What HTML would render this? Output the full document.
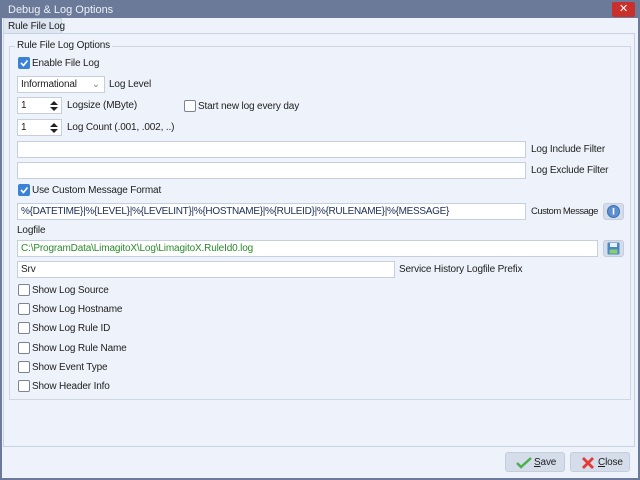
<!DOCTYPE html>
<html><head><meta charset="utf-8"><style>
*{margin:0;padding:0;box-sizing:border-box}
body{width:640px;height:480px;overflow:hidden;background:#6b7a99;font-family:"Liberation Sans",Tahoma,sans-serif;font-size:10px;letter-spacing:-0.15px;color:#1e1e1e;position:relative}
.a{position:absolute;white-space:nowrap}
.win{position:absolute;left:2px;top:18px;width:636px;height:460px;background:#eef2fa}
.inp{position:absolute;background:#fff;border:1px solid #c6cfdc;height:17px;padding-left:3px;line-height:15px;overflow:hidden;white-space:nowrap}
.cb{position:absolute;width:12px;height:12px;border:1px solid #7b8494;background:#fff;border-radius:2px}
.cb.on{background:#3b82d6;border-color:#3b82d6}
.btn{position:absolute;background:#d4dde9;border:1px solid #c4cedb;border-radius:3px}
</style></head><body>
<div class="a" style="left:8px;top:4px;color:#eef1f6;font-size:11px;letter-spacing:0">Debug &amp; Log Options</div>
<div class="a" style="left:612px;top:2px;width:23px;height:15px;background:#c9302c;border-radius:2px;color:#fff;text-align:center;font-size:11px;line-height:15px">✕</div>
<div class="win"></div>
<div class="a" style="left:3px;top:18px;width:59px;height:16px;background:#dde6f1;border:1px solid #c8d2e0;border-bottom:none;padding-left:4px;line-height:16px">Rule File Log</div>
<div class="a" style="left:3px;top:33px;width:632px;height:414px;border:1px solid #c8d2e0;background:#eef2fa"></div>
<div class="a" style="left:9px;top:46px;width:622px;height:354px;border:1px solid #cfd7e3"></div>
<div class="a" style="left:15px;top:40px;background:#eef2fa;padding:0 2px">Rule File Log Options</div>

<div class="cb on" style="left:18px;top:57px"><svg width="10" height="10" style="position:absolute;left:0;top:0"><path d="M2 5l2.5 2.5L8.5 2.5" stroke="#fff" stroke-width="1.6" fill="none"/></svg></div>
<div class="a" style="left:32px;top:58px">Enable File Log</div>

<div class="inp" style="left:17px;top:76px;width:88px">Informational<span style="position:absolute;right:4px;top:0;color:#888">&#8964;</span></div>
<div class="a" style="left:109px;top:79px">Log Level</div>

<div class="inp" style="left:17px;top:97px;width:45px">1<svg width="8" height="12" style="position:absolute;right:3px;top:2px"><path d="M0 5L4 1L8 5Z M0 7L4 11L8 7Z" fill="#222"/></svg></div>
<div class="a" style="left:67px;top:100px">Logsize (MByte)</div>
<div class="cb" style="left:184px;top:100px"></div>
<div class="a" style="left:198px;top:101px">Start new log every day</div>
<div class="inp" style="left:17px;top:119px;width:45px">1<svg width="8" height="12" style="position:absolute;right:3px;top:2px"><path d="M0 5L4 1L8 5Z M0 7L4 11L8 7Z" fill="#222"/></svg></div>
<div class="a" style="left:67px;top:122px">Log Count (.001, .002, ..)</div>

<div class="inp" style="left:17px;top:141px;width:509px"></div>
<div class="a" style="left:531px;top:144px">Log Include Filter</div>
<div class="inp" style="left:17px;top:162px;width:509px"></div>
<div class="a" style="left:531px;top:165px">Log Exclude Filter</div>

<div class="cb on" style="left:18px;top:184px"><svg width="10" height="10" style="position:absolute;left:0;top:0"><path d="M2 5l2.5 2.5L8.5 2.5" stroke="#fff" stroke-width="1.6" fill="none"/></svg></div>
<div class="a" style="left:32px;top:185px">Use Custom Message Format</div>

<div class="inp" style="left:17px;top:203px;width:509px;color:#1c2f55;letter-spacing:-0.3px">%{DATETIME}|%{LEVEL}|%{LEVELINT}|%{HOSTNAME}|%{RULEID}|%{RULENAME}|%{MESSAGE}</div>
<div class="a" style="left:531px;top:206px;letter-spacing:-0.5px;font-size:9.5px">Custom Message</div>
<div class="btn" style="left:603px;top:203px;width:21px;height:17px"><svg width="13" height="13" style="position:absolute;left:3px;top:1px"><circle cx="6.5" cy="6.5" r="6" fill="#5b8fcf" stroke="#3a6fb0"/><rect x="5.7" y="3" width="1.6" height="6.5" fill="#fff"/></svg></div>

<div class="a" style="left:17px;top:225px">Logfile</div>
<div class="inp" style="left:17px;top:240px;width:581px;color:#2a8a2a">C:\ProgramData\LimagitoX\Log\LimagitoX.RuleId0.log</div>
<div class="btn" style="left:603px;top:240px;width:21px;height:17px"><svg width="13" height="13" style="position:absolute;left:3px;top:1px"><rect x="0.5" y="0.5" width="12" height="12" rx="1" fill="#4a86c8"/><rect x="3" y="1" width="7" height="4" fill="#e8f0fa"/><rect x="2.5" y="7.5" width="8" height="4" fill="#8bd06a"/></svg></div>

<div class="inp" style="left:17px;top:261px;width:378px">Srv</div>
<div class="a" style="left:399px;top:264px">Service History Logfile Prefix</div>

<div class="cb" style="left:18px;top:284px"></div><div class="a" style="left:32px;top:285px">Show Log Source</div>
<div class="cb" style="left:18px;top:303px"></div><div class="a" style="left:32px;top:304px">Show Log Hostname</div>
<div class="cb" style="left:18px;top:322px"></div><div class="a" style="left:32px;top:323px">Show Log Rule ID</div>
<div class="cb" style="left:18px;top:342px"></div><div class="a" style="left:32px;top:343px">Show Log Rule Name</div>
<div class="cb" style="left:18px;top:361px"></div><div class="a" style="left:32px;top:362px">Show Event Type</div>
<div class="cb" style="left:18px;top:380px"></div><div class="a" style="left:32px;top:381px">Show Header Info</div>

<div class="btn" style="left:505px;top:452px;width:60px;height:20px"><svg width="16" height="12" style="position:absolute;left:10px;top:4px"><path d="M1 6l4 4L15 1" stroke="#4caf50" stroke-width="2.5" fill="none"/></svg><span class="a" style="left:28px;top:4px"><u>S</u>ave</span></div>
<div class="btn" style="left:570px;top:452px;width:60px;height:20px"><svg width="12" height="12" style="position:absolute;left:11px;top:4px"><path d="M1 1L11 11M11 1L1 11" stroke="#e53935" stroke-width="2.8"/></svg><span class="a" style="left:27px;top:4px"><u>C</u>lose</span></div>
</body></html>
